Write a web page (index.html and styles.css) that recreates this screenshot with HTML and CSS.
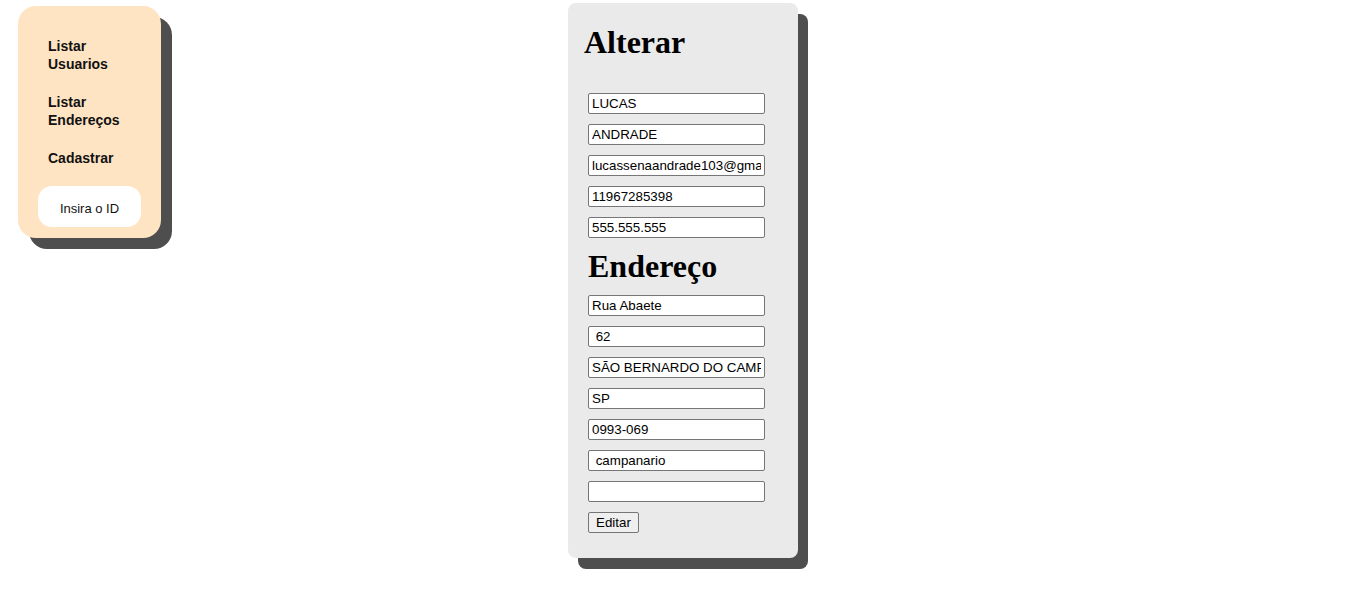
FILE: index.html
```html
<!DOCTYPE html>
<html lang="pt-BR">
<head>
<meta charset="utf-8">
<title>Alterar</title>
<link rel="stylesheet" href="styles.css">
</head>
<body>
<div class="page">
  <nav class="sidebar">
    <ul class="menu">
      <li>Listar Usuarios</li>
      <li>Listar Endereços</li>
      <li>Cadastrar</li>
    </ul>
    <div class="id-box">Insira o ID</div>
  </nav>
  <main class="card">
    <h1 class="title">Alterar</h1>
    <form class="form">
      <input class="field" type="text" value="LUCAS">
      <input class="field" type="text" value="ANDRADE">
      <input class="field" type="text" value="lucassenaandrade103@gmail.com">
      <input class="field" type="text" value="11967285398">
      <input class="field" type="text" value="555.555.555">
      <h1 class="subtitle">Endereço</h1>
      <input class="field" type="text" value="Rua Abaete">
      <input class="field" type="text" value=" 62">
      <input class="field" type="text" value="SÃO BERNARDO DO CAMPO">
      <input class="field" type="text" value="SP">
      <input class="field" type="text" value="0993-069">
      <input class="field" type="text" value=" campanario">
      <input class="field" type="text" value="">
      <button class="btn" type="button">Editar</button>
    </form>
  </main>
  <div class="spacer"></div>
</div>
</body>
</html>
```
FILE: styles.css
```css
html, body {
  margin: 0;
  padding: 0;
  background: #ffffff;
}

.page {
  display: grid;
  grid-template-columns: 1fr 230px 1fr;
  align-items: start;
  min-height: 613px;
  padding-bottom: 20px;
  box-sizing: border-box;
}

.sidebar {
  justify-self: start;
  margin: 6px 0 0 18px;
  width: 143px;
  box-sizing: border-box;
  padding: 31px 20px 11px;
  background: #ffe4c4;
  border-radius: 18px;
  box-shadow: 11px 11px 0 #4e4e4e;
  font-family: "Liberation Sans", Arial, sans-serif;
}

.menu {
  list-style: none;
  margin: 0;
  padding: 0;
}

.menu li {
  padding: 0 10px;
  margin-bottom: 20px;
  font-size: 14px;
  font-weight: bold;
  line-height: 18px;
  color: #111;
}

.menu li:last-child {
  margin-bottom: 19px;
}

.id-box {
  height: 41px;
  display: flex;
  align-items: center;
  justify-content: center;
  padding-top: 4px;
  box-sizing: border-box;
  background: #ffffff;
  border-radius: 14px;
  font-size: 13px;
  color: #111;
}

.card {
  margin-top: 3px;
  width: 230px;
  box-sizing: border-box;
  padding: 0 16px 15px;
  background: #eaeaea;
  border-radius: 8px;
  box-shadow: 10px 11px 0 #4e4e4e;
  display: flow-root;
}

.title {
  margin: 21px 0;
  font-family: "Liberation Serif", "Times New Roman", serif;
  font-size: 32px;
  font-weight: bold;
  color: #000;
}

.form {
  padding: 11px 0 0 4px;
  display: flex;
  flex-direction: column;
  align-items: flex-start;
  gap: 10px;
}

.subtitle {
  margin: 0;
  font-family: "Liberation Serif", "Times New Roman", serif;
  font-size: 32px;
  font-weight: bold;
  line-height: 37px;
  color: #000;
}

.field {
  width: 177px;
  height: 21px;
  box-sizing: border-box;
  margin: 0;
  padding: 1px 3px;
  border: 1px solid #767676;
  border-radius: 2px;
  background: #fff;
  font-family: "Liberation Sans", Arial, sans-serif;
  font-size: 13.33px;
  color: #000;
}

.btn {
  height: 21px;
  margin: 0 0 10px;
  padding: 1px 7px;
  border: 1px solid #767676;
  border-radius: 2px;
  background: #efefef;
  font-family: "Liberation Sans", Arial, sans-serif;
  font-size: 13.33px;
  color: #000;
}
```
